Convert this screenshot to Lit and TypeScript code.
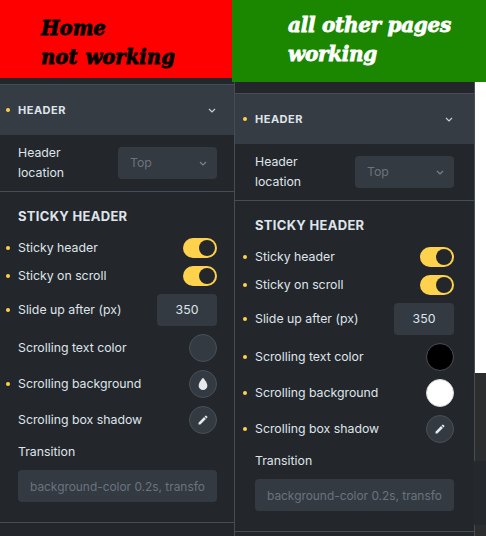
import { LitElement, html, css, svg } from "lit";
import { customElement } from "lit/decorators.js";

const chevron = (cls: string) => html`<svg class=${cls} viewBox="0 0 8 5" width="8" height="5"><polyline points="1,1 4,4 7,1" fill="none" stroke="currentColor" stroke-width="1.2"/></svg>`;
const drop = svg`<path d="M12 2.5 C12 2.5 5.5 9 5.5 14.5 a6.5 6.5 0 0 0 13 0 C18.5 9 12 2.5 12 2.5z" fill="currentColor"/>`;
const pencil = svg`<path d="M3 17.25V21h3.75L17.81 9.94l-3.75-3.75L3 17.25zM20.71 7.04c.39-.39.39-1.02 0-1.41l-2.34-2.34c-.39-.39-1.02-.39-1.41 0l-1.83 1.83 3.75 3.75 1.83-1.83z" fill="currentColor"/>`;

@customElement("app-root")
export class AppRoot extends LitElement {
  static styles = css`
    :host { display: block; width: 486px; height: 536px; overflow: hidden; font-family: Inter, "Liberation Sans", sans-serif; font-size: 12.3px; color: #dfe4ea; background: #23272b; }
    .page { display: flex; height: 536px; }
    .col-left { width: 232px; flex: none; display: flex; flex-direction: column; }
    .col-right { flex: 1; min-width: 0; display: flex; flex-direction: column; }
    .banner { flex: none; font-family: "DejaVu Serif", serif; font-weight: 700; font-style: italic; line-height: 29px; box-sizing: border-box; }
    .red { height: 78px; background: #fe0000; color: #000; padding: 14px 0 0 41px; font-size: 19.5px; word-spacing: 1px; letter-spacing: 0.1px; -webkit-text-stroke: 0.8px #000; }
    .green { height: 82px; background: #1b8700; color: #fff; padding: 11px 0 0 56px; font-size: 20px; letter-spacing: -0.3px; -webkit-text-stroke: 0.8px #fff; }
    .under { flex: 1; display: flex; min-height: 0; }
    .side { flex: 1; display: flex; flex-direction: column; }
    .white { height: 291px; background: #fff; flex: none; }
    .dark { flex: 1; background: #2c2d2f; padding-top: 88px; }
    .tab { height: 64px; background: #25282c; margin-left: -2px; }
    .panel { background: #23272b; box-sizing: border-box; flex: none; display: flex; flex-direction: column; }
    .a { width: 234px; height: 458px; padding-top: 6px; --pl: 18px; --pr: 17px; --dot: 6px; }
    .b { width: 241px; margin-left: 2px; padding-top: 11px; border-left: 1px solid #474d56; border-right: 1px solid #474d56; --pl: 20px; --pr: 20px; --dot: 8px; }
    .section-head { height: 51px; flex: none; box-sizing: border-box; border-top: 1px solid #474d56; background: #363c44; display: flex; align-items: center; padding: 0 calc(var(--pr) + 1px) 0 var(--pl); font-size: 11px; font-weight: 700; letter-spacing: 0.5px; position: relative; justify-content: space-between; }
    .section-head::before { content: ""; position: absolute; left: var(--dot); top: 50%; width: 4px; height: 4px; margin-top: -2px; border-radius: 50%; background: #ffd24d; }
    .head-chev { color: #c9ced5; }
    .loc { display: flex; align-items: center; justify-content: space-between; padding: 8px var(--pr) 8px var(--pl); border-bottom: 1px solid #474d56; line-height: 20px; }
    .loc-label { width: 70px; }
    .select { width: 99px; height: 32px; box-sizing: border-box; background: #333a42; border-radius: 4px; display: flex; align-items: center; justify-content: space-between; padding: 0 10px 0 12px; color: #6c737d; }
    .sel-chev { color: #7c838c; }
    .group { display: flex; flex-direction: column; gap: 8px; padding: 14px var(--pr) 20px var(--pl); border-bottom: 1px solid #474d56; }
    .title { font-size: 13px; font-weight: 700; letter-spacing: 0.3px; line-height: 20px; margin-bottom: 4px; }
    .row { display: flex; align-items: center; justify-content: space-between; position: relative; line-height: 20px; }
    .dotted::before { content: ""; position: absolute; left: calc(var(--dot) - var(--pl)); top: 50%; width: 4px; height: 4px; margin-top: -2px; border-radius: 50%; background: #ffd24d; }
    .toggle { width: 34px; height: 20px; box-sizing: border-box; padding: 2px; border-radius: 10px; background: #ffd24d; display: flex; justify-content: flex-end; }
    .knob { width: 16px; height: 16px; border-radius: 50%; background: #23272b; }
    .num { width: 60px; height: 32px; border-radius: 4px; background: #333a42; display: flex; align-items: center; justify-content: center; }
    .swatch { width: 28px; height: 28px; box-sizing: border-box; border-radius: 50%; background: #343a42; border: 1px solid #495059; display: flex; align-items: center; justify-content: center; color: #e6e8eb; }
    .black { background: #000; }
    .white-sw { background: #fff; border-color: #d5d7da; }
    .text { height: 32px; border-radius: 4px; background: #333a42; color: #6c737d; display: flex; align-items: center; padding: 0 12px; overflow: hidden; white-space: nowrap; font-size: 11.9px; }
    .rest { flex: 1; }
  `;

  private panel(cls: string, dots: boolean[], sw: unknown[]) {
    const d = (i: number) => (dots[i] ? "row dotted" : "row");
    return html`<div class="panel ${cls}">
      <div class="section-head"><span>HEADER</span>${chevron("head-chev")}</div>
      <div class="loc"><div class="loc-label">Header location</div><div class="select"><span>Top</span>${chevron("sel-chev")}</div></div>
      <div class="group">
        <div class="title">STICKY HEADER</div>
        <div class="row dotted"><span>Sticky header</span><div class="toggle"><div class="knob"></div></div></div>
        <div class="row dotted"><span>Sticky on scroll</span><div class="toggle"><div class="knob"></div></div></div>
        <div class="row dotted"><span>Slide up after (px)</span><div class="num">350</div></div>
        <div class=${d(0)}><span>Scrolling text color</span>${sw[0]}</div>
        <div class=${d(1)}><span>Scrolling background</span>${sw[1]}</div>
        <div class=${d(2)}><span>Scrolling box shadow</span>${sw[2]}</div>
        <div class="row"><span>Transition</span></div>
        <div class="text">background-color 0.2s, transfo</div>
      </div>
      <div class="rest"></div>
    </div>`;
  }

  render() {
    const pen = html`<div class="swatch"><svg viewBox="0 0 24 24" width="12" height="12">${pencil}</svg></div>`;
    return html`<div class="page">
      <div class="col-left">
        <div class="banner red">Home<br />not working</div>
        ${this.panel("a", [false, true, false], [
          html`<div class="swatch"></div>`,
          html`<div class="swatch"><svg viewBox="0 0 24 24" width="16" height="16">${drop}</svg></div>`,
          pen,
        ])}
      </div>
      <div class="col-right">
        <div class="banner green">all other pages<br />working</div>
        <div class="under">
          ${this.panel("b", [true, true, true], [
            html`<div class="swatch black"></div>`,
            html`<div class="swatch white-sw"></div>`,
            pen,
          ])}
          <div class="side"><div class="white"></div><div class="dark"><div class="tab"></div></div></div>
        </div>
      </div>
    </div>`;
  }
}
